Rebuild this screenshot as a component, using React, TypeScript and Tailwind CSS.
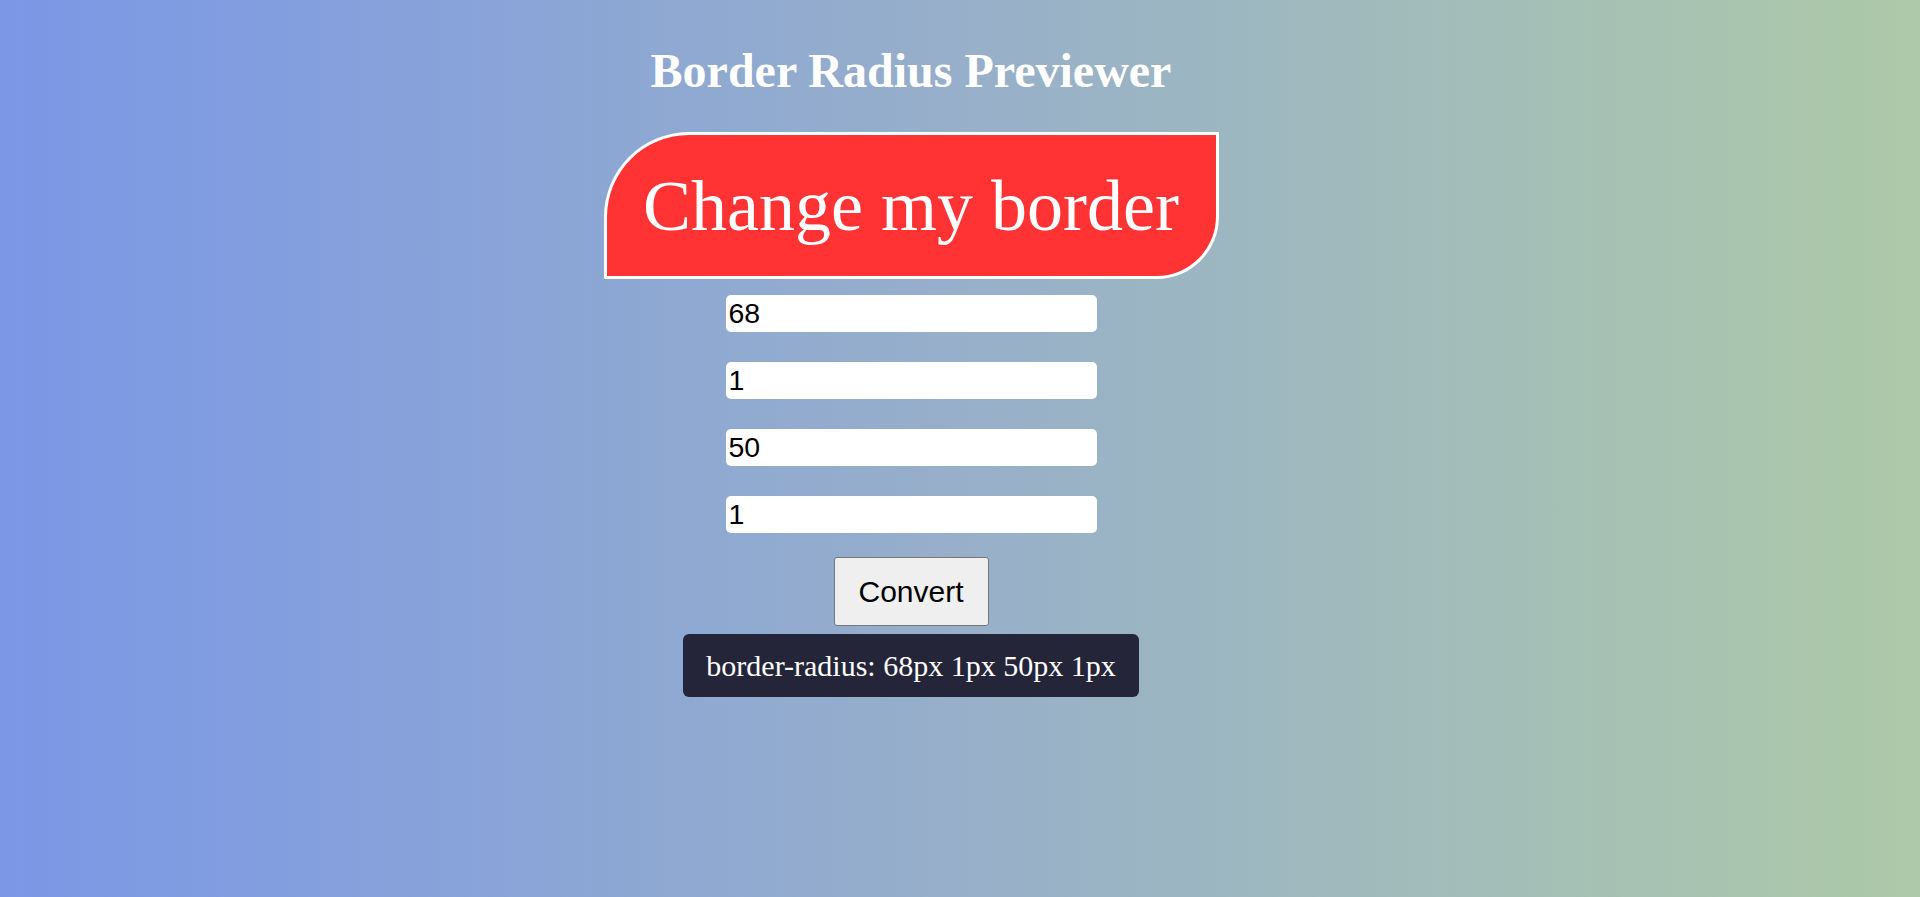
import { useState } from 'react';

export default function App() {
    const [values, setValues] = useState(['68', '1', '50', '1']);
    const [radius, setRadius] = useState('68px 1px 50px 1px');

    const convert = () => {
        setRadius(values.map((v) => `${v || 0}px`).join(' '));
    };

    const scaled = radius
        .split(' ')
        .map((v) => `${parseFloat(v) * 1.25}px`)
        .join(' ');

    return (
        <div className="min-h-screen w-full bg-linear-to-r from-[#7b97e6] via-[#97afc9] to-[#adc9a8] font-['Liberation_Serif',serif]">
            <div className="flex flex-col items-center pr-[98px]">
                <h1 className="mt-[45px] text-[48px] leading-[52px] font-bold text-white">Border Radius Previewer</h1>

                <div
                    className="mt-[35px] w-[615px] h-[147px] flex items-center justify-center bg-[#ff3333] border-[3px] border-white text-white text-[72px] leading-normal"
                    style={{ borderRadius: scaled }}
                >
                    Change my border
                </div>

                <div className="mt-[16px] flex flex-col gap-[30px]">
                    {values.map((v, i) => (
                        <input
                            key={i}
                            type="text"
                            value={v}
                            onChange={(e) => {
                                const next = [...values];
                                next[i] = e.target.value;
                                setValues(next);
                            }}
                            className="w-[371px] h-[37px] px-[3px] bg-white rounded-[5px] text-black text-[28.5px] font-['Liberation_Sans',Arial,sans-serif] outline-none"
                        />
                    ))}
                </div>

                <button
                    onClick={convert}
                    className="mt-[24px] w-[155px] h-[69px] bg-[#efefef] border border-[#767676] rounded-[3px] text-black text-[30px] font-['Liberation_Sans',Arial,sans-serif]"
                >
                    Convert
                </button>

                <div className="mt-[8px] h-[63px] px-[23px] flex items-center bg-[#252539] rounded-[6px] text-white text-[30px] whitespace-nowrap">
                    border-radius: {radius}
                </div>
            </div>
        </div>
    );
}
